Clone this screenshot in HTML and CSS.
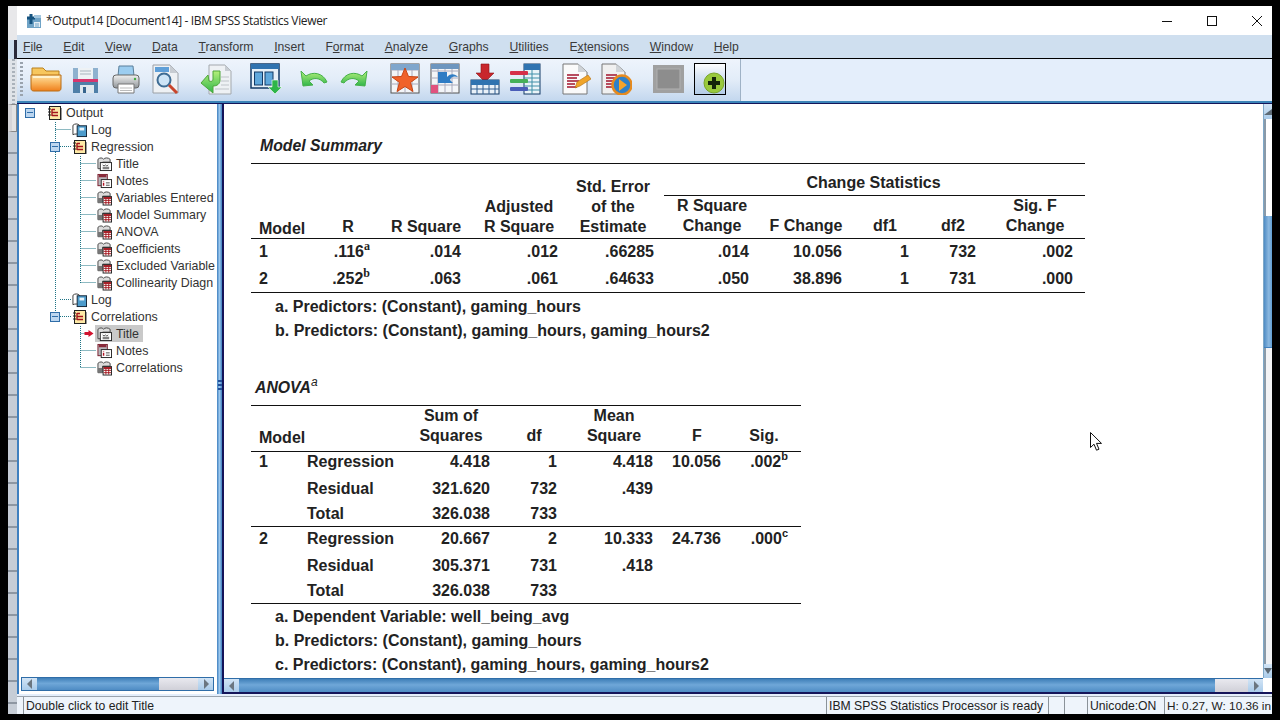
FILE: index.html
```html
<!DOCTYPE html>
<html lang="en">
<head>
<meta charset="utf-8">
<title>*Output14 [Document14] - IBM SPSS Statistics Viewer</title>
<link rel="stylesheet" href="styles.css">
</head>
<body>
<svg class="defs" aria-hidden="true">
  <defs>
    <linearGradient id="gFolder" x1="0" y1="0" x2="0" y2="1"><stop offset="0" stop-color="#fde3a8"/><stop offset=".5" stop-color="#f9b45c"/><stop offset="1" stop-color="#ef7f1c"/></linearGradient>
    <linearGradient id="gGreen" x1="0" y1="0" x2="0" y2="1"><stop offset="0" stop-color="#b5f07a"/><stop offset="1" stop-color="#2fb54a"/></linearGradient>
    <linearGradient id="gGrey" x1="0" y1="0" x2="0" y2="1"><stop offset="0" stop-color="#f2f2f2"/><stop offset="1" stop-color="#8f9498"/></linearGradient>
    <linearGradient id="gPlus" x1="0" y1="0" x2="0" y2="1"><stop offset="0" stop-color="#ffffff"/><stop offset=".4" stop-color="#d8e4f2"/><stop offset="1" stop-color="#b3cbe6"/></linearGradient>
    <symbol id="t-outline" viewBox="0 0 15 16">
      <rect x="2.500" y="1.500" width="11" height="13" fill="#fde9a6" stroke="#222"/>
      <rect x="14" y="3" width="1" height="12" fill="#999"/>
      <path d="M1 4h3M1 7h3M1 10h3" stroke="#222"/>
      <path d="M5 4v7M5 4.500h3M5 7.500h6M5 10.500h6" stroke="#a3141c" stroke-width="1.400" fill="none"/>
    </symbol>
    <symbol id="t-log" viewBox="0 0 16 16">
      <path d="M1 13V3c2-2 5-2 7 0v10c-2-1-5-1-7 0z" fill="#fff" stroke="#333"/>
      <rect x="5.500" y="3.500" width="10" height="11.500" fill="#4d9ccc" stroke="#123"/>
      <rect x="8" y="5.500" width="5" height="3" fill="#e7f3fb"/>
    </symbol>
    <symbol id="t-title" viewBox="0 0 16 16">
      <path d="M1 13V3c2-2 5-2 6 0 1-2 5-2 7 0v3H6v7z" fill="#dcdcdc" stroke="#444"/>
      <rect x="3.500" y="6.500" width="12" height="8.500" fill="#fff" stroke="#222"/>
      <path d="M6 9l1.500 1L9 9l1.500 1L12 9M6 11.500h7M6 13h7" stroke="#555" fill="none"/>
    </symbol>
    <symbol id="t-notes" viewBox="0 0 16 16">
      <rect x="1" y="1" width="10" height="12" fill="#b8b8bc" stroke="#7a1b2a"/>
      <rect x="2" y="1" width="8" height="3" fill="#8a2a3a"/>
      <rect x="4.500" y="6.500" width="11" height="8.500" fill="#fff" stroke="#222"/>
      <path d="M7 8.500v.8M7 10v3" stroke="#b01020" stroke-width="1.500"/>
      <path d="M9.500 10h4M9.500 12.500h4" stroke="#444"/>
    </symbol>
    <symbol id="t-table" viewBox="0 0 16 16">
      <path d="M1 13V3c2-2 5-2 6 0 1-2 5-2 7 0v3H6v7z" fill="#dcdcdc" stroke="#444"/>
      <rect x="1" y="8" width="5" height="5" fill="#777"/>
      <rect x="6.500" y="6.500" width="9" height="9" fill="#fff" stroke="#222"/>
      <path d="M7 7h8v2H7z" fill="#a3141c"/>
      <path d="M7 10.500h8M7 13h8M9.500 9v6M12.500 9v6" stroke="#a3141c"/>
    </symbol>
  </defs>
</svg>

<div class="sliver">
  <div class="sl-top"></div>
  <div class="sl-menu"></div>
  <div class="sl-grip"></div>
  <div class="sl-box"></div>
  <div class="sl-tiles"></div>
</div>

<div class="window">
  <header class="titlebar">
    <svg class="appicon" width="16" height="16" viewBox="0 0 16 16">
      <path d="M1 5h14v10H1z" fill="#6fa3c6"/>
      <path d="M5 1v10M1 5h8" stroke="#15537f" stroke-width="3"/>
      <path d="M8 2h7v3H8z" fill="#a3c6de"/>
      <rect x="8" y="9" width="6" height="5" fill="#e4eef5"/>
      <path d="M10 10v4M12 10v4" stroke="#6fa3c6"/>
    </svg>
    <span class="titletext">*Output14 [Document14] - IBM SPSS Statistics Viewer</span>
    <div class="winctl">
      <svg width="12" height="12" viewBox="0 0 12 12"><path d="M1 6.500h10" stroke="#111"/></svg>
      <svg width="12" height="12" viewBox="0 0 12 12"><rect x="1.500" y="1.500" width="9" height="9" fill="none" stroke="#111"/></svg>
      <svg width="12" height="12" viewBox="0 0 12 12"><path d="M1 1l10 10M11 1L1 11" stroke="#111"/></svg>
    </div>
  </header>

  <nav class="menubar">
    <span><u>F</u>ile</span><span><u>E</u>dit</span><span><u>V</u>iew</span><span><u>D</u>ata</span><span><u>T</u>ransform</span><span><u>I</u>nsert</span><span>F<u>o</u>rmat</span><span><u>A</u>nalyze</span><span><u>G</u>raphs</span><span><u>U</u>tilities</span><span>E<u>x</u>tensions</span><span><u>W</u>indow</span><span><u>H</u>elp</span>
  </nav>

  <div class="toolbar">
    <div class="tools">
      <div class="grip"></div>
      <div class="tool">
        <svg width="34" height="32" viewBox="0 0 34 32"><path d="M3 9V5h11l3 3h13v6H3z" fill="#f7c75e" stroke="#b9801c"/><path d="M2 12h30v13c0 2-1 3-3 3H5c-2 0-3-1-3-3z" fill="url(#gFolder)" stroke="#b86c14"/><path d="M4 14h26" stroke="#fff3cf" stroke-width="2"/></svg>
      </div>
      <div class="tool">
        <svg width="28" height="32" viewBox="0 0 28 32"><path d="M1 5h25v25H1z" fill="#4f7fa8"/><path d="M1 5h25v14H1z" fill="#8eb1cf"/><rect x="6" y="5" width="15" height="11" fill="#eef2f5"/><path d="M8 8h11M8 11h11" stroke="#a9b4bd"/><rect x="1" y="16" width="25" height="3" fill="#d6366e"/><rect x="8" y="22" width="14" height="8" fill="#dfe8ef"/><rect x="11" y="24" width="3" height="6" fill="#37658e"/></svg>
      </div>
      <div class="tool">
        <svg width="30" height="32" viewBox="0 0 30 32"><path d="M8 3h14l1 10H7z" fill="#9ccdf0" stroke="#5a7f9a"/><rect x="2" y="12" width="26" height="13" rx="3" fill="url(#gGrey)" stroke="#666"/><path d="M7 21h16v9H7z" fill="#fff" stroke="#777"/><path d="M9 25h12M9 27.500h12" stroke="#bbb"/><circle cx="24" cy="16" r="1.200" fill="#4a4"/></svg>
      </div>
      <div class="tool">
        <svg width="30" height="32" viewBox="0 0 30 32"><path d="M2 2h17l8 8v20H2z" fill="#eef1f4" stroke="#9a9fa5"/><path d="M19 2v8h8z" fill="#c7ccd2"/><rect x="4" y="4" width="14" height="5" fill="#5f9fd8"/><circle cx="13" cy="17" r="6.500" fill="#cde4f6" stroke="#3e6c94" stroke-width="2"/><path d="M18 22l8 8" stroke="#c8452c" stroke-width="3"/></svg>
      </div>
      <div class="tool g10">
        <svg width="34" height="32" viewBox="0 0 34 32"><path d="M10 2h16l6 6v23H10z" fill="#eef1f4" stroke="#a3a8ad"/><path d="M26 2v6h6z" fill="#c7ccd2"/><path d="M22 14h8M22 18h8M22 22h8M16 26h14" stroke="#bfc4c9"/><path d="M14 8h7v9c0 4-3 6-7 6v7L2 20l7-8 1 6c3 1 4 0 4-2z" fill="url(#gGreen)" stroke="#4ea63a"/></svg>
      </div>
      <div class="tool g10">
        <svg width="32" height="32" viewBox="0 0 32 32"><rect x="1" y="1" width="28" height="24" fill="#e6f0f8" stroke="#123a66" stroke-width="1.500"/><rect x="1" y="1" width="28" height="5" fill="#2f73b0"/><rect x="4.500" y="9" width="8" height="13" fill="#5fa8dc" stroke="#123a66"/><rect x="15" y="9" width="8" height="13" fill="#5fa8dc" stroke="#123a66"/><path d="M22 17h6v7h4l-7 7-7-7h4z" fill="#2fb54a" stroke="#fff" stroke-width=".6"/></svg>
      </div>
      <div class="tool g8">
        <svg width="28" height="20" viewBox="0 0 28 20"><path d="M1 2l2 15 10-1-4-4c5-4 11-3 15 2l3-1C23 4 13 2 6 7z" fill="url(#gGreen)" stroke="#46b04a"/></svg>
      </div>
      <div class="tool">
        <svg width="28" height="20" viewBox="0 0 28 20"><path d="M27 2l-2 15-10-1 4-4C14 8 8 9 4 14l-3-1C5 4 15 2 22 7z" fill="url(#gGreen)" stroke="#46b04a"/></svg>
      </div>
      <div class="tool g11">
        <svg width="30" height="32" viewBox="0 0 30 32"><rect x="1" y="1" width="28" height="29" fill="#f3f5f8" stroke="#555"/><path d="M1 7h28M1 14h28M1 21h28M8 1v29M15 1v29M22 1v29" stroke="#aab"/><rect x="1" y="1" width="28" height="6" fill="#7fa6cc"/><path d="M15 5l3.500 8.500 9.500.5-7.500 5.500 2.500 9-8-5-8 5 2.500-9L2 14l9.500-.5z" fill="#f0622a" stroke="#c94412"/></svg>
      </div>
      <div class="tool">
        <svg width="30" height="32" viewBox="0 0 30 32"><rect x="1" y="1" width="28" height="29" fill="#f3f5f8" stroke="#555"/><path d="M1 8h28M1 15h28M1 22h28M8 1v29M15 1v29M22 1v29" stroke="#aab"/><rect x="1" y="1" width="28" height="5" fill="#6d96bf"/><rect x="1" y="22" width="7" height="8" fill="#e0527e"/><path d="M8 9h9v5c4-4 8-3 11 0-3-1-7-1-8 3l3 3H8z" fill="#2f7cc4"/></svg>
      </div>
      <div class="tool">
        <svg width="30" height="32" viewBox="0 0 30 32"><path d="M11 1h8v9h5l-9 9-9-9h5z" fill="#c8262c" stroke="#8c1318" stroke-width=".6"/><rect x="1" y="17" width="28" height="14" fill="#e9f1f8" stroke="#123a66"/><rect x="1" y="17" width="28" height="5" fill="#2f73b0"/><path d="M1 26h28M7 22v9M13 22v9M19 22v9M25 22v9" stroke="#2f5f92"/></svg>
      </div>
      <div class="tool">
        <svg width="32" height="32" viewBox="0 0 32 32"><rect x="15" y="1" width="16" height="30" fill="#eaf4f8" stroke="#123a66"/><rect x="15" y="1" width="16" height="6" fill="#2f73b0"/><path d="M15 11h16M15 15h16M15 19h16M15 23h16M15 27h16M23 7v24" stroke="#3f8fa8"/><rect x="1" y="8" width="18" height="4" rx="1" fill="#d62f4a"/><rect x="1" y="16" width="18" height="4" rx="1" fill="#46b05a"/><rect x="1" y="24" width="18" height="4" rx="1" fill="#4a5db8"/></svg>
      </div>
      <div class="tool g11">
        <svg width="30" height="32" viewBox="0 0 30 32"><path d="M2 1h15l9 8v22H2z" fill="#fafafa" stroke="#777"/><path d="M17 1v8h9z" fill="#cfd3d7"/><path d="M6 12h12M6 15h10M6 18h12M6 21h8M6 24h10" stroke="#a3142c" stroke-width="1.500"/><path d="M14 25l2-6 11-7 3 4-11 7z" fill="#f0a428" stroke="#b06d10" stroke-width=".6"/></svg>
      </div>
      <div class="tool">
        <svg width="32" height="32" viewBox="0 0 32 32"><path d="M2 1h14l9 8v22H2z" fill="#f0f0f0" stroke="#777"/><path d="M16 1v8h9z" fill="#cfd3d7"/><path d="M6 12h11M6 15h9M6 18h9M6 21h7M6 24h8" stroke="#a3142c" stroke-width="1.500"/><circle cx="22" cy="22" r="9.500" fill="#2e80c8" stroke="#e58a1f" stroke-width="2.500"/><path d="M19 16l8 6-8 6z" fill="#f6a32a"/></svg>
      </div>
      <div class="tool g12">
        <svg width="31" height="28" viewBox="0 0 31 28"><rect width="31" height="28" fill="#a0a0a0"/><rect x="4" y="4" width="23" height="20" fill="#8d8d8d" stroke="#b0b0b0"/></svg>
      </div>
      <div class="tool g2">
        <svg width="32" height="32" viewBox="0 0 32 32"><rect x=".5" y=".5" width="31" height="31" fill="url(#gPlus)" stroke="#000"/><circle cx="20" cy="20" r="10" fill="#99c93c" stroke="#7aa52a"/><path d="M20 14v12M14 20h12" stroke="#14240a" stroke-width="4"/></svg>
      </div>
    </div>
  </div>

  <main class="panes">
    <aside class="treepane">
      <div class="tree">
        <svg class="treelines" width="120" height="290" viewBox="0 0 120 290">
          <path d="M39.500 18V211M39.500 25.500H55M44 42.500H55M44 195.500H55M44 212.500H55M64.500 50V179.500M64.500 59.500H80M64.500 76.500H80M64.500 93.500H80M64.500 110.500H80M64.500 127.500H80M64.500 144.500H80M64.500 161.500H80M64.500 178.500H80M64.500 220V263.500M64.500 229.500H69M64.500 246.500H80M64.500 263.500H80" fill="none" stroke="#1d7485" stroke-dasharray="1 1"/>
        </svg>
        <div class="node l0"><i class="tg"></i><svg class="ni"><use href="#t-outline"/></svg><span>Output</span></div>
        <div class="node l1"><b class="ts"></b><svg class="ni"><use href="#t-log"/></svg><span>Log</span></div>
        <div class="node l1"><i class="tg"></i><svg class="ni"><use href="#t-outline"/></svg><span>Regression</span></div>
        <div class="node l2"><b class="ts"></b><svg class="ni"><use href="#t-title"/></svg><span>Title</span></div>
        <div class="node l2"><b class="ts"></b><svg class="ni"><use href="#t-notes"/></svg><span>Notes</span></div>
        <div class="node l2"><b class="ts"></b><svg class="ni"><use href="#t-table"/></svg><span>Variables Entered</span></div>
        <div class="node l2"><b class="ts"></b><svg class="ni"><use href="#t-table"/></svg><span>Model Summary</span></div>
        <div class="node l2"><b class="ts"></b><svg class="ni"><use href="#t-table"/></svg><span>ANOVA</span></div>
        <div class="node l2"><b class="ts"></b><svg class="ni"><use href="#t-table"/></svg><span>Coefficients</span></div>
        <div class="node l2"><b class="ts"></b><svg class="ni"><use href="#t-table"/></svg><span>Excluded Variable</span></div>
        <div class="node l2"><b class="ts"></b><svg class="ni"><use href="#t-table"/></svg><span>Collinearity Diagn</span></div>
        <div class="node l1"><b class="ts"></b><svg class="ni"><use href="#t-log"/></svg><span>Log</span></div>
        <div class="node l1"><i class="tg"></i><svg class="ni"><use href="#t-outline"/></svg><span>Correlations</span></div>
        <div class="node l2 sel"><svg class="arrow" width="9" height="9" viewBox="0 0 9 9"><path d="M0 3h4V1l5 3.500L4 8V6H0z" fill="#d2122e"/></svg><svg class="ni"><use href="#t-title"/></svg><span>Title</span></div>
        <div class="node l2"><b class="ts"></b><svg class="ni"><use href="#t-notes"/></svg><span>Notes</span></div>
        <div class="node l2"><b class="ts"></b><svg class="ni"><use href="#t-table"/></svg><span>Correlations</span></div>
      </div>
      <div class="hscroll hs-left">
        <div class="sb-btn"><svg width="8" height="10" viewBox="0 0 8 10"><path d="M6 0v10L1 5z" fill="#6b7680"/></svg></div>
        <div class="sb-track sb-t1"></div><div class="sb-thumb th1"></div><div class="sb-track sb-t2"></div>
        <div class="sb-btn"><svg width="8" height="10" viewBox="0 0 8 10"><path d="M2 0v10l5-5z" fill="#6b7680"/></svg></div>
      </div>
    </aside>
    <div class="splitter"><span></span><span></span><span></span></div>
    <section class="viewer">
      <div class="viewrow">
        <div class="content">
          <h2 class="tt first-tt">Model Summary</h2>
          <table class="pivot ms">
            <colgroup><col class="c1"><col class="c2"><col class="c3"><col class="c4"><col class="c5"><col class="c6"><col class="c7"><col class="c8"><col class="c9"><col class="c10"></colgroup>
            <thead>
              <tr class="h1">
                <th rowspan="2" class="left p0">Model</th>
                <th rowspan="2" class="p1">R</th>
                <th rowspan="2" class="p1">R Square</th>
                <th rowspan="2" class="p1">Adjusted<br>R Square</th>
                <th rowspan="2" class="p1">Std. Error<br>of the<br>Estimate</th>
                <th colspan="5" class="group">Change Statistics</th>
              </tr>
              <tr class="h2">
                <th class="p2">R Square<br>Change</th>
                <th class="p2">F Change</th>
                <th class="p2">df1</th>
                <th class="p2">df2</th>
                <th class="p2 lastc">Sig. F<br>Change</th>
              </tr>
            </thead>
            <tbody>
              <tr><td>1</td><td>.116<sup class="serif">a</sup></td><td>.014</td><td>.012</td><td>.66285</td><td>.014</td><td>10.056</td><td>1</td><td>732</td><td>.002</td></tr>
              <tr><td>2</td><td>.252<sup class="serif">b</sup></td><td>.063</td><td>.061</td><td>.64633</td><td>.050</td><td>38.896</td><td>1</td><td>731</td><td>.000</td></tr>
            </tbody>
          </table>
          <div class="notes">
            <p>a. Predictors: (Constant), gaming_hours</p>
            <p>b. Predictors: (Constant), gaming_hours, gaming_hours2</p>
          </div>
          <h2 class="tt second-tt">ANOVA<sup>a</sup></h2>
          <table class="pivot an">
            <colgroup><col class="a1"><col class="a2"><col class="a3"><col class="a4"><col class="a5"><col class="a6"><col class="a7"></colgroup>
            <thead>
              <tr class="ah">
                <th colspan="2" class="left p0b">Model</th>
                <th class="p3">Sum of<br>Squares</th>
                <th class="p3">df</th>
                <th class="p3">Mean<br>Square</th>
                <th class="p3">F</th>
                <th class="p3 sig">Sig.</th>
              </tr>
            </thead>
            <tbody>
              <tr class="r1"><td>1</td><td>Regression</td><td>4.418</td><td>1</td><td>4.418</td><td>10.056</td><td>.002<sup>b</sup></td></tr>
              <tr class="r2"><td></td><td>Residual</td><td>321.620</td><td>732</td><td>.439</td><td></td><td></td></tr>
              <tr class="r3"><td></td><td>Total</td><td>326.038</td><td>733</td><td></td><td></td><td></td></tr>
              <tr class="r4"><td>2</td><td>Regression</td><td>20.667</td><td>2</td><td>10.333</td><td>24.736</td><td>.000<sup>c</sup></td></tr>
              <tr class="r5"><td></td><td>Residual</td><td>305.371</td><td>731</td><td>.418</td><td></td><td></td></tr>
              <tr class="r6"><td></td><td>Total</td><td>326.038</td><td>733</td><td></td><td></td><td></td></tr>
            </tbody>
          </table>
          <div class="notes">
            <p>a. Dependent Variable: well_being_avg</p>
            <p>b. Predictors: (Constant), gaming_hours</p>
            <p>c. Predictors: (Constant), gaming_hours, gaming_hours2</p>
          </div>
          <svg class="cursor" width="12" height="19" viewBox="0 0 12 19"><path d="M.5.5v15l3.500-3.300 2.500 6 2.500-1-2.500-5.800h5z" fill="#fff" stroke="#111"/></svg>
        </div>
        <div class="vscroll">
          <div class="vb"><svg width="8" height="6" viewBox="0 0 8 6"><path d="M0 6l8-6v6z" fill="#5d6a75"/></svg></div>
          <div class="vt1"></div>
          <div class="vthumb"></div>
          <div class="vt2"></div>
          <div class="vb vb2"><svg width="8" height="6" viewBox="0 0 8 6"><path d="M0 0h8L4 6z" fill="#5d6a75"/></svg></div>
        </div>
      </div>
      <div class="hscroll hs-right">
        <div class="sb-btn"><svg width="8" height="10" viewBox="0 0 8 10"><path d="M6 0v10L1 5z" fill="#6b7680"/></svg></div>
        <div class="sb-track sb-t3"></div><div class="sb-thumb th2"></div>
        <div class="sb-btn"><svg width="8" height="10" viewBox="0 0 8 10"><path d="M2 0v10l5-5z" fill="#6b7680"/></svg></div>
      </div>
    </section>
  </main>

  <footer class="status">
    <span class="st s1">Double click to edit Title</span>
    <span class="st s2">IBM SPSS Statistics Processor is ready</span>
    <span class="st s3"></span>
    <span class="st s4"></span>
    <span class="st s5">Unicode:ON</span>
    <span class="st s6">H: 0.27, W: 10.36 in</span>
  </footer>
</div>
</body>
</html>
```
FILE: styles.css
```css
* { box-sizing: border-box; }
html, body { margin: 0; height: 100%; }
body {
  background: #000;
  width: 1280px;
  height: 720px;
  overflow: hidden;
  padding: 6px 8px 6px 8px;
  display: flex;
  font-family: "Liberation Sans", Arial, sans-serif;
  color: #222;
}
.defs { position: absolute; width: 0; height: 0; }

.sliver { width: 9px; display: flex; flex-direction: column; background: #cfd3d8; flex: none; }
.sl-top { height: 34px; background: #e8e8ea; }
.sl-menu { height: 19px; background: #cfdfef; border-right: 3px solid #2a2a3a; border-left: 4px solid #cfdfef; }
.sl-grip { height: 45px; background: repeating-linear-gradient(to bottom, #aab2bb 0 2px, #dfe3e8 2px 4px); background-color: #dfe3e8; border-left: 4px solid #dfe3e8; border-right: 2px solid #dfe3e8; }
.sl-box { height: 28px; background: #e3e3e3; border: 1px solid #888; border-left: 4px solid #d5d5d8; }
.sl-tiles { flex: 1; background: repeating-linear-gradient(to bottom, #c6cdd6 0 20px, #8e97a2 20px 22px); }

.window { flex: 1; min-width: 0; display: flex; flex-direction: column; background: #e4eefb; }

.titlebar { height: 29px; background: #fff; display: flex; align-items: center; padding-left: 9px; flex: none; }
.appicon { flex: none; margin-right: 4px; }
.titletext { font: 12px/1 "Open Sans", "Noto Sans", sans-serif; letter-spacing: -.35px; color: #222; }
.winctl { margin-left: auto; display: flex; gap: 33px; padding-right: 9px; }

.menubar { background: #cfdfef; display: flex; gap: 20.700px; align-items: center; padding-left: 6px; font-size: 12.200px; color: #3a3a3a; flex: none; border-bottom: 1px solid #000; height: 24px; }
.menubar span { white-space: nowrap; }

.toolbar { height: 44px; background: #e4eefb; border-bottom: 2px solid #3b84b8; flex: none; }
.tools { width: 724px; height: 100%; display: flex; align-items: center; padding: 0 0 2px 9px; background: linear-gradient(to bottom, #eef4fc 0%, #e2ecf8 50%, #c3d7ee 100%); border-right: 1px solid #9fb2c6; position: relative; }
.grip { position: absolute; left: 3px; top: 3px; bottom: 3px; width: 3px; background: repeating-linear-gradient(to bottom, #9aa3ad 0 2px, transparent 2px 4px); }
.tool { width: 40px; flex: none; display: flex; justify-content: center; align-items: center; }
.g10 { margin-left: 10px; }
.g8 { margin-left: 8px; }
.g11 { margin-left: 11px; }
.g12 { margin-left: 12px; }
.g2 { margin-left: 2px; }

.panes { flex: 1; min-height: 0; display: flex; background: #5f9ed4; border-top: 1px solid #14145a; }
.treepane { width: 200px; flex: none; background: #fff; border-left: 2px solid #3f80bf; display: flex; flex-direction: column; }
.tree { flex: 1; min-height: 0; overflow: hidden; position: relative; font-size: 12.400px; color: #333; }
.treelines { position: absolute; left: -3px; top: 0; }
.node { height: 17px; display: flex; align-items: center; white-space: nowrap; position: relative; }
.l0 { padding-left: 6px; }
.l1 { padding-left: 31px; }
.l2 { padding-left: 56px; }
.tg { width: 10px; height: 10px; flex: none; border: 1px solid #2f6da8; background: #bcd6f0 linear-gradient(#2f6da8, #2f6da8) center / 6px 1px no-repeat; position: relative; }
.ts { width: 10px; height: 10px; flex: none; }
.ni { width: 15px; height: 16px; margin-left: 12px; margin-right: 4px; flex: none; position: relative; background: #fff; }
.sel::before { content: ""; position: absolute; left: 76px; top: 0; width: 48px; height: 17px; background: #c9c9c9; }
.sel > * { position: relative; }
.sel .ni { margin-left: 2px; margin-right: 4px; background: transparent; }
.arrow { margin-left: 9px; margin-right: 1px; width: 10px; flex: none; }

.hscroll { display: flex; align-items: stretch; flex: none; border: 1px solid #2f6da8; height: 14px; background: #5f9ed4; }
.hs-left { margin: 0 3px 3px 2px; }
.sb-btn { width: 15px; flex: none; background: linear-gradient(#d2e4f5, #a9cbea); display: flex; align-items: center; justify-content: center; }
.sb-track { background: linear-gradient(to bottom, #3f7fb8, #6fa7d8 45%, #4f8cc4); }
.sb-t1 { width: 124px; }
.sb-t2 { width: 0; }
.sb-t3 { flex: 1; }
.sb-thumb { background: linear-gradient(#e9e9ef, #d0d0d8); flex: none; }
.th1 { width: 39px; }
.th2 { width: 33px; }

.splitter { width: 5px; flex: none; background: linear-gradient(to right, #3f80bf, #9cc8ee 50%, #3f80bf); display: flex; flex-direction: column; gap: 2px; align-items: center; justify-content: center; padding-bottom: 28px; }
.splitter span { width: 4px; height: 2px; background: #234f9a; }

.viewer { flex: 1; min-width: 0; display: flex; flex-direction: column; background: #fff; border-left: 2px solid #14145a; border-bottom: 2px solid #14145a; }
.viewrow { flex: 1; min-height: 0; display: flex; }
.content { flex: 1; min-width: 0; overflow: hidden; padding: 32px 0 0 27px; position: relative; font-size: 16px; color: #222; }
.tt { margin: 0; font: italic 700 15.800px/20px "Liberation Sans", Arial, sans-serif; }
.first-tt { margin: 0 0 7px 9px; }
.second-tt { margin: 35px 0 7px 4px; }
.second-tt sup { font-weight: 400; font-size: 12px; }
sup { font-size: 11px; line-height: 0; vertical-align: 7px; }
.serif { font-family: "Liberation Serif", serif; font-weight: 700; font-size: 12px; }

.pivot { border-collapse: collapse; table-layout: fixed; border-top: 1px solid #111; border-bottom: 1px solid #111; font-size: 16px; line-height: 20px; }
.pivot th { font-weight: 700; padding: 0; vertical-align: bottom; text-align: center; }
.pivot thead { border-bottom: 1px solid #111; }
.pivot .left { text-align: left; padding-left: 8px; }
.pivot td { text-align: right; font-weight: 700; padding: 0; }

.ms { width: 834px; }
.c1 { width: 69px; } .c2 { width: 56px; } .c3 { width: 100px; } .c4 { width: 86px; } .c5 { width: 102px; }
.c6 { width: 96px; } .c7 { width: 92px; } .c8 { width: 66px; } .c9 { width: 70px; } .c10 { width: 97px; }
.h1 { height: 32px; }
.h2 { height: 42px; }
.ms th.p0 { padding-bottom: 0; line-height: 18px; }
.ms th.p1 { padding-bottom: 1px; }
.ms th.p2 { padding-bottom: 2px; }
.ms th.lastc { padding-right: 3px; }
.group { border-bottom: 1px solid #111; padding: 0 2px 2px 0 !important; }
.ms tbody tr { height: 27px; }
.ms td:nth-child(1) { text-align: left; padding-left: 8px; }
.ms td:nth-child(2) { padding-right: 6px; }
.ms td:nth-child(3) { padding-right: 15px; }
.ms td:nth-child(4) { padding-right: 4px; }
.ms td:nth-child(5) { padding-right: 10px; }
.ms td:nth-child(6) { padding-right: 11px; }
.ms td:nth-child(7) { padding-right: 10px; }
.ms td:nth-child(8) { padding-right: 9px; }
.ms td:nth-child(9) { padding-right: 12px; }
.ms td:nth-child(10) { padding-right: 12px; }

.notes { margin-top: 2px; font-size: 16px; line-height: 24px; font-weight: 700; }
.an + .notes { margin-top: 1px; }
.notes p { margin: 0; padding-left: 24px; white-space: nowrap; }

.an { width: 550px; }
.a1 { width: 48px; } .a2 { width: 105px; } .a3 { width: 94px; } .a4 { width: 72px; } .a5 { width: 88px; } .a6 { width: 78px; } .a7 { width: 65px; }
.ah { height: 45px; }
.an th.p3 { padding-bottom: 5px; }
.an th.p0b { padding-bottom: 3px; }
.an th.sig { padding-right: 9px; }
.an td { vertical-align: top; padding-top: 3px; }
.r1 { height: 24px; } .r2 { height: 25px; } .r3 { height: 26px; border-bottom: 1px solid #111; }
.r4 { height: 26px; } .r5 { height: 25px; } .r6 { height: 26px; }
.an .r1 td { padding-top: 0; }
.an .r4 td { padding-top: 2px; }
.an td:nth-child(1) { text-align: left; padding-left: 8px; }
.an td:nth-child(2) { text-align: left; padding-left: 8px; }
.an td:nth-child(3) { padding-right: 8px; }
.an td:nth-child(4) { padding-right: 13px; }
.an td:nth-child(5) { padding-right: 5px; }
.an td:nth-child(6) { padding-right: 15px; }
.an td:nth-child(7) { padding-right: 13px; }

.cursor { position: absolute; left: 866px; top: 328px; }

.vscroll { width: 9px; flex: none; display: flex; flex-direction: column; background: #fff; border-left: 1px solid #7fa8c8; }
.vb { height: 15px; background: linear-gradient(#d2e4f5, #a9cbea); flex: none; display: flex; align-items: center; justify-content: center; }
.vb2 { height: 14px; }
.vt1 { height: 97px; background: linear-gradient(to right, #8a9aa8 0 2px, #fff 2px); flex: none; }
.vthumb { height: 132px; background: linear-gradient(to right, #4f8cc4, #8db9e0 60%, #5f9ed4); flex: none; border-bottom: 1px solid #3f80bf; }
.vt2 { flex: 1; background: linear-gradient(to right, #8a9aa8 0 2px, #f3f3f5 2px); }
.hs-right { border-width: 1px 0 0 0; height: 14px; margin-right: 9px; }

.status { height: 18px; flex: none; background: #eef4fb; border-top: 1px solid #9aa3ad; margin-top: 2px; display: flex; font-size: 12.200px; color: #222; padding-left: 6px; }
.st { border-left: 1px solid #8a9299; padding-left: 2px; white-space: nowrap; overflow: hidden; line-height: 18px; flex: none; }
.s1 { width: 803px; }
.s2 { width: 222px; }
.s3 { width: 16px; }
.s4 { width: 23px; }
.s5 { width: 77px; }
.s6 { width: 108px; font-size: 11.800px; }
```
